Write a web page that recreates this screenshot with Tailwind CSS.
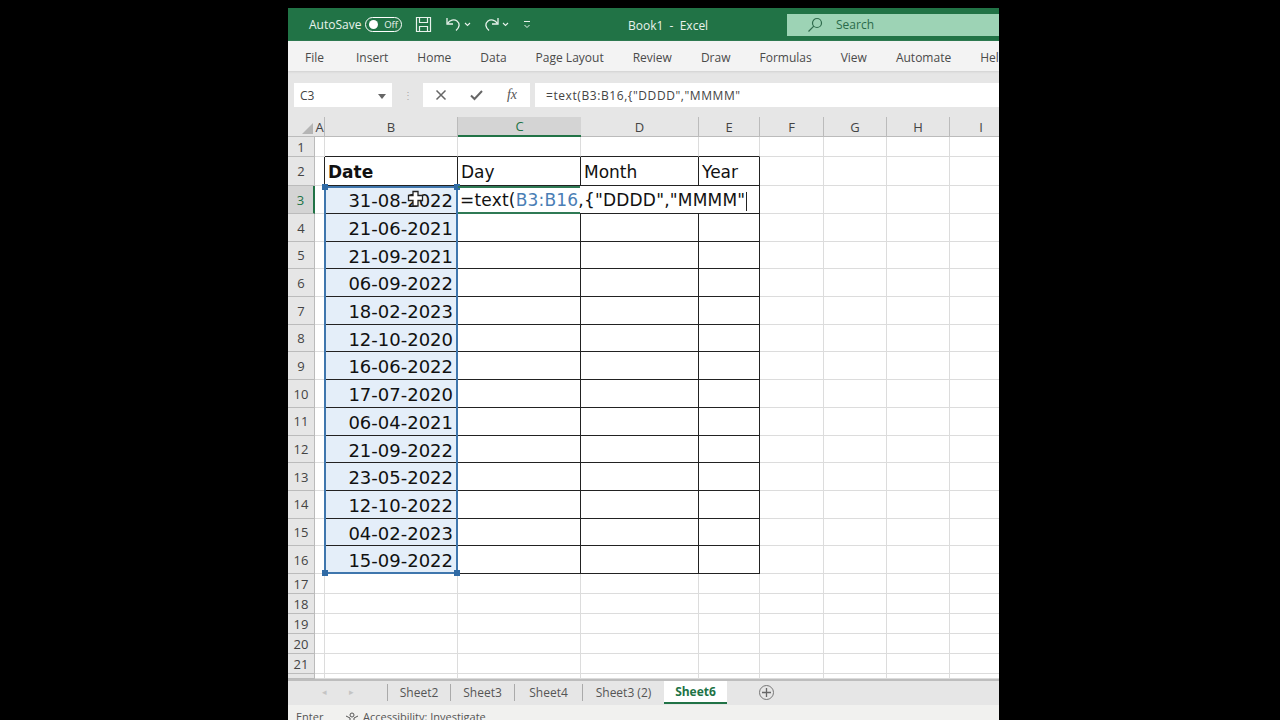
<!DOCTYPE html>
<html lang="en">
<head>
    <meta charset="UTF-8">
    <script src="https://cdn.jsdelivr.net/npm/@tailwindcss/browser@4"></script>
    <title>Book1 - Excel</title>
</head>
<body class="bg-black overflow-hidden h-[720px]">
    <div class="w-[711px] h-[720px] ml-[288px] pt-2 overflow-hidden font-['Open_Sans',sans-serif]">
        <!-- title bar -->
        <header class="h-[33px] bg-[#217346] text-[#e8f2ec] flex items-center text-xs">
            <span class="ml-[21px] w-[50px]">AutoSave</span>
            <div class="ml-[6px] w-[37px] h-[15px] rounded-full border border-white flex items-center justify-between pl-[3px] pr-[3px]">
                <span class="w-[9px] h-[9px] rounded-full bg-white"></span>
                <span class="text-[9.5px] leading-none">Off</span>
            </div>
            <svg class="ml-[13px]" width="17" height="17" viewBox="0 0 17 17" fill="none" stroke="#e8f2ec" stroke-width="1.2"><path d="M1.5 1.5h14v14h-14z"/><path d="M4.5 1.5v5h8v-5M4.5 15.5v-5h8v5"/></svg>
            <svg class="ml-[13px]" width="17" height="17" viewBox="0 0 17 17" fill="none" stroke="#e8f2ec" stroke-width="1.3"><path d="M2 2v6h6"/><path d="M2.5 7.5C5 4 9 3 12 5c3 2.500 3 6-1 9.500"/></svg>
            <svg class="ml-[2px]" width="7" height="5" viewBox="0 0 7 5" fill="none" stroke="#e8f2ec" stroke-width="1.1"><path d="M1 1l2.500 2.500L6 1"/></svg>
            <svg class="ml-[12px]" width="17" height="17" viewBox="0 0 17 17" fill="none" stroke="#e8f2ec" stroke-width="1.3"><path d="M15 2v6H9"/><path d="M14.500 7.500C12 4 8 3 5 5c-3 2.500-3 6 1 9.500"/></svg>
            <svg class="ml-[2px]" width="7" height="5" viewBox="0 0 7 5" fill="none" stroke="#e8f2ec" stroke-width="1.1"><path d="M1 1l2.500 2.500L6 1"/></svg>
            <svg class="ml-[14px]" width="8" height="9" viewBox="0 0 8 9" fill="none" stroke="#e8f2ec" stroke-width="1"><path d="M1 1.500h6M1.500 5l2.500 2.500L6.500 5"/></svg>
            <span class="ml-[97px] w-[159px] pt-[2px]">Book1&nbsp; -&nbsp; Excel</span>
            <div class="h-[22px] flex-1 bg-[#9dd3b5] text-[#2b6b4a] flex items-center pl-[20px] gap-[13px]">
                <svg width="16" height="16" viewBox="0 0 16 16" fill="none" stroke="#2f6b4c" stroke-width="1.2"><circle cx="10" cy="6" r="4.500"/><path d="M6.800 9.200L1.500 14.500"/></svg>
                <span class="text-xs">Search</span>
            </div>
        </header>

        <!-- ribbon tabs -->
        <nav class="h-[30px] bg-[#f3f3f3] text-[#4a4a4a] text-xs flex items-center pt-[3px] pl-[17px] gap-[29px] whitespace-nowrap overflow-hidden shadow-[0_1px_2px_#d0d0d0] relative">
            <span class="mr-[3px]">File</span>
            <span>Insert</span>
            <span>Home</span>
            <span>Data</span>
            <span>Page Layout</span>
            <span>Review</span>
            <span>Draw</span>
            <span>Formulas</span>
            <span>View</span>
            <span>Automate</span>
            <span>Help</span>
        </nav>

        <!-- formula bar -->
        <section class="h-[46px] bg-[#e6e6e6] flex pt-3 pb-[10px] text-xs text-[#444]">
            <div class="ml-[6px] w-[98px] bg-white flex items-center justify-between pt-[2px] pl-[6px] pr-[6px]">
                <span>C3</span>
                <svg width="8" height="5" viewBox="0 0 8 5" fill="#666"><path d="M0 0h8L4 5z"/></svg>
            </div>
            <div class="w-[31px] flex items-center justify-center text-[#aaa] text-[10px] leading-none">⋮</div>
            <div class="w-[107px] bg-white flex items-center justify-between pl-[12px] pr-[13px]">
                <svg width="12" height="12" viewBox="0 0 12 12" fill="none" stroke="#666" stroke-width="1.500"><path d="M1.500 1.500l9 9M10.500 1.500l-9 9"/></svg>
                <svg width="13" height="12" viewBox="0 0 13 12" fill="none" stroke="#666" stroke-width="2"><path d="M1 6.500L4.500 10 12 2"/></svg>
                <span class="font-['Liberation_Serif',serif] italic text-sm text-[#555]">fx</span>
            </div>
            <div class="ml-[5px] flex-1 bg-white flex items-center pt-[2px] pl-[11px] tracking-[0.58px]">=text(B3:B16,{"DDDD","MMMM"</div>
        </section>

        <!-- sheet -->
        <main id="sheet" class="relative h-[562px] bg-white grid grid-cols-[27px_10px_133px_123px_118px_61px_64px_63px_63px_63px] grid-rows-[20px_20px_29px_28px_repeat(13,27.69px)_repeat(5,20px)_5px] overflow-hidden">
            <!-- selected range B3:B16 -->
            <div class="absolute left-[36px] top-[69px] w-[134px] h-[388px] border-2 border-[#3f76ad] z-10 pointer-events-none">
                <span class="absolute -left-[4px] -top-[4px] w-[6px] h-[6px] bg-[#2f6aa5]"></span>
                <span class="absolute -right-[4px] -top-[4px] w-[6px] h-[6px] bg-[#2f6aa5]"></span>
                <span class="absolute -left-[4px] -bottom-[4px] w-[6px] h-[6px] bg-[#2f6aa5]"></span>
                <span class="absolute -right-[4px] -bottom-[4px] w-[6px] h-[6px] bg-[#2f6aa5]"></span>
            </div>
            <!-- active cell C3 -->
            <div class="absolute left-[170px] top-[69px] w-[122px] h-[28px] border-y-2 border-[#2f7a55] z-10 pointer-events-none"></div>
            <!-- mouse cursor -->
            <svg class="absolute left-[119px] top-[73px] z-20" width="18" height="18" viewBox="0 0 18 18" fill="#fff" stroke="#222" stroke-width="1.300"><path d="M6 1.500h5v4h4.500v5H11v5.500H6v-5.500H1.500v-5H6z"/></svg>
        </main>

        <!-- sheet tabs -->
        <footer class="h-[26px] bg-[#e6e6e6] border-t-2 border-[#bdbdbd] flex items-start text-xs text-[#555]">
            <div class="w-[99px] h-[22px] flex items-center justify-center gap-[22px] text-[#c4c4c4] text-[9px]"><span>◂</span><span>▸</span></div>
            <div class="w-[63px] h-[17px] mt-[3px] border-l border-[#aaa] flex items-center justify-center">Sheet2</div>
            <div class="w-[64px] h-[17px] mt-[3px] border-l border-[#aaa] flex items-center justify-center">Sheet3</div>
            <div class="w-[68px] h-[17px] mt-[3px] border-l border-[#aaa] flex items-center justify-center">Sheet4</div>
            <div class="w-[82px] h-[17px] mt-[3px] border-l border-[#aaa] flex items-center justify-center">Sheet3 (2)</div>
            <div class="w-[63px] h-[23px] bg-white border-b-2 border-[#217346] text-[#217346] font-bold flex items-center justify-center">Sheet6</div>
            <div class="ml-[32px] mt-[4px] w-[15px] h-[15px] rounded-full border border-[#777] flex items-center justify-center">
                <svg width="9" height="9" viewBox="0 0 9 9" stroke="#666" stroke-width="1.300"><path d="M4.500 0v9M0 4.500h9"/></svg>
            </div>
        </footer>

        <!-- status bar -->
        <div class="h-[20px] bg-[#f1f1ef] flex items-center text-[11px] text-[#555] pl-2 pt-[5px]">
            <span class="w-[49px]">Enter</span>
            <svg width="14" height="12" viewBox="0 0 14 12" fill="none" stroke="#555"><circle cx="7" cy="3" r="2"/><path d="M1 4l4 2v5M13 4L9 6v5"/></svg>
            <span class="ml-[4px]">Accessibility: Investigate</span>
        </div>
    </div>

    <script>
        const letters = ['A','B','C','D','E','F','G','H','I'];
        const dates = ['31-08-2022','21-06-2021','21-09-2021','06-09-2022','18-02-2023','12-10-2020','16-06-2022','17-07-2020','06-04-2021','21-09-2022','23-05-2022','12-10-2022','04-02-2023','15-09-2022'];
        const sheet = document.getElementById('sheet');
        let html = `<div class="bg-[#e6e6e6] border-b border-[#bbb] flex items-end justify-end"><span class="w-0 h-0 mr-[2px] mb-[2px] border-l-[11px] border-l-transparent border-b-[11px] border-b-[#b5b5b5]"></span></div>`;

        // column headers
        letters.forEach(function (l) {
            if (l === 'C') {
                html += `<div class="bg-[#d4d4d4] border-b-2 border-[#217346] text-[#217346] text-[13px] pt-[2px] flex items-center justify-center">C</div>`;
            } else {
                html += `<div class="bg-[#e6e6e6] border-r border-b border-[#bbb] text-[#444] text-[13px] pt-[2px] flex items-center justify-center">${l}</div>`;
            }
        });

        for (let r = 1; r <= 22; r++) {
            const inTable = r >= 2 && r <= 16;
            const rowLabel = r === 22 ? '' : r;
            if (r === 3) {
                html += `<div class="bg-[#d4d4d4] border-r-2 border-b border-r-[#217346] border-b-[#bbb] text-[#217346] text-[13px] pt-[2px] flex items-center justify-center">3</div>`;
            } else {
                html += `<div class="bg-[#e6e6e6] border-r border-b border-[#bbb] text-[#444] text-[13px] pt-[2px] flex items-center justify-center">${rowLabel}</div>`;
            }
            // column A
            html += inTable
                ? `<div class="border-r border-b border-r-[#222] border-b-[#dcdcdc]"></div>`
                : `<div class="border-r border-b border-[#dcdcdc]"></div>`;

            if (r === 1) {
                for (let c = 0; c < 4; c++) html += `<div class="border-r border-b border-r-[#dcdcdc] border-b-[#222]"></div>`;
            } else if (r === 2) {
                html += `<div class="border-r border-b border-[#222] pl-[3px] text-[17px] leading-[30px] font-bold text-[#111] font-['DejaVu_Sans',sans-serif]">Date</div>`;
                ['Day','Month','Year'].forEach(function (t) {
                    html += `<div class="border-r border-b border-[#222] pl-[3px] text-[17px] leading-[30px] text-[#111] font-['DejaVu_Sans',sans-serif]">${t}</div>`;
                });
            } else if (inTable) {
                html += `<div class="bg-[#e4eef9] border-r border-b border-[#222] text-right pr-[4px] text-lg leading-[29px] text-[#111] font-['DejaVu_Sans',sans-serif]">${dates[r - 3]}</div>`;
                if (r === 3) {
                    html += `<div class="col-span-3 border-r border-b border-[#222] pl-[2px] text-[17px] leading-[29px] tracking-[0.2px] text-[#111] whitespace-nowrap overflow-hidden font-['DejaVu_Sans',sans-serif]">=text(<span class="text-[#4a7eb5]">B3:B16</span>,{"DDDD","MMMM"<span class="inline-block w-px h-[19px] bg-[#222] align-middle ml-[1px]"></span></div>`;
                } else {
                    for (let c = 0; c < 3; c++) html += `<div class="border-r border-b border-[#222]"></div>`;
                }
            } else {
                for (let c = 0; c < 4; c++) html += `<div class="border-r border-b border-[#dcdcdc]"></div>`;
            }
            // columns F to I
            for (let c = 0; c < 4; c++) html += `<div class="border-r border-b border-[#dcdcdc]"></div>`;
        }
        sheet.insertAdjacentHTML('beforeend', html);
    </script>
</body>
</html>
